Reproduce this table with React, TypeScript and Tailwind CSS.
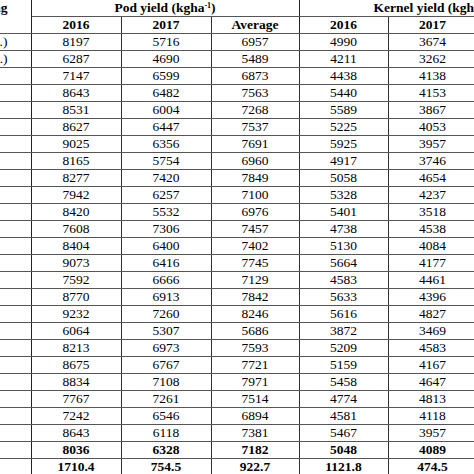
import React from "react";

type Row = { label: string; cells: string[]; bold?: boolean };

const raw: [string, number, number, number, number, number][] = [
  ["(Ch.L.)", 8197, 5716, 6957, 4990, 3674],
  ["(Ch.)", 6287, 4690, 5489, 4211, 3262],
  ["ICGV 00350", 7147, 6599, 6873, 4438, 4138],
  ["ICGV 02266", 8643, 6482, 7563, 5440, 4153],
  ["ICGV 03042", 8531, 6004, 7268, 5589, 3867],
  ["ICGV 05155", 8627, 6447, 7537, 5225, 4053],
  ["ICGV 06040", 9025, 6356, 7691, 5925, 3957],
  ["ICGV 06099", 8165, 5754, 6960, 4917, 3746],
  ["ICGV 06420", 8277, 7420, 7849, 5058, 4654],
  ["ICGV 07210", 7942, 6257, 7100, 5328, 4237],
  ["ICGV 07246", 8420, 5532, 6976, 5401, 3518],
  ["ICGV 07368", 7608, 7306, 7457, 4738, 4538],
  ["ICGV 08041", 8404, 6400, 7402, 5130, 4084],
  ["ICGV 09127", 9073, 6416, 7745, 5664, 4177],
  ["ICGV 10143", 7592, 6666, 7129, 4583, 4461],
  ["ICGV 11211", 8770, 6913, 7842, 5633, 4396],
  ["ICGV 12305", 9232, 7260, 8246, 5616, 4827],
  ["ICGV 13115", 6064, 5307, 5686, 3872, 3469],
  ["ICGV 13189", 8213, 6973, 7593, 5209, 4583],
  ["ICGV 14001", 8675, 6767, 7721, 5159, 4167],
  ["ICGV 14421", 8834, 7108, 7971, 5458, 4647],
  ["ICGV 15033", 7767, 7261, 7514, 4774, 4813],
  ["ICGV 15090", 7242, 6546, 6894, 4581, 4118],
  ["ICGV 15114", 8643, 6118, 7381, 5467, 3957],
];

const rows: Row[] = [
  ...raw.map(([label, a, b, c, d, e]) => ({
    label: "",
    cells: [a, b, c, d, e, Math.round((d + e) / 2)].map(String),
  })),
  { label: "Mean", cells: ["8036", "6328", "7182", "5048", "4089", "4569"], bold: true },
  { label: "LSD (0.05)", cells: ["1710.4", "754.5", "922.7", "1121.8", "474.5", "588.3"], bold: true },
];
rows[0].label = "(Ch.L.)";
rows[1].label = "(Ch.)";

const font = { fontFamily: '"Liberation Serif", "Times New Roman", serif' };

export default function App() {
  return (
    <div className="w-[474px] h-[474px] overflow-hidden bg-white text-black" style={font}>
      <table className="ml-[-89px] border-collapse table-fixed w-[655px] text-[13.5px] leading-[16px]">
        <colgroup>
          <col className="w-[120px]" />
          <col className="w-[90px]" />
          <col className="w-[90px]" />
          <col className="w-[88px]" />
          <col className="w-[89px]" />
          <col className="w-[89px]" />
          <col className="w-[89px]" />
        </colgroup>
        <thead>
          <tr className="h-[16px]">
            <th
              rowSpan={2}
              className="p-0 pr-[23px] align-top text-right font-bold whitespace-nowrap overflow-hidden border-r border-b border-r-[#222] border-b-[#555]"
            >
              Spacing
            </th>
            <th colSpan={3} className="p-0 text-center font-bold border-r border-b border-r-[#222] border-b-[#555]">
              Pod yield (kgha<sup className="text-[8px]">-1</sup>)
            </th>
            <th colSpan={3} className="p-0 text-center font-bold border-b border-b-[#555]">
              Kernel yield (kgha<sup className="text-[8px]">-1</sup>)
            </th>
          </tr>
          <tr className="h-[17px]">
            {["2016", "2017", "Average", "2016", "2017", "Average"].map((h, i) => (
              <th
                key={i}
                className={`p-0 text-center font-bold border-b border-b-[#555] ${
                  i === 2 ? "border-r border-r-[#222]" : "border-r border-r-[#333]"
                }`}
              >
                {h}
              </th>
            ))}
          </tr>
        </thead>
        <tbody>
          {rows.map((r, ri) => (
            <tr key={ri} className={`h-[17px] ${r.bold ? "font-bold" : ""}`}>
              <td className="p-0 pr-[23px] text-right whitespace-nowrap overflow-hidden border-r border-b border-r-[#222] border-b-[#555]">
                {ri < 2 ? r.label : ""}
              </td>
              {r.cells.map((c, ci) => (
                <td
                  key={ci}
                  className="p-0 text-center border-r border-b border-r-[#333] border-b-[#555]"
                >
                  {c}
                </td>
              ))}
            </tr>
          ))}
        </tbody>
      </table>
    </div>
  );
}
